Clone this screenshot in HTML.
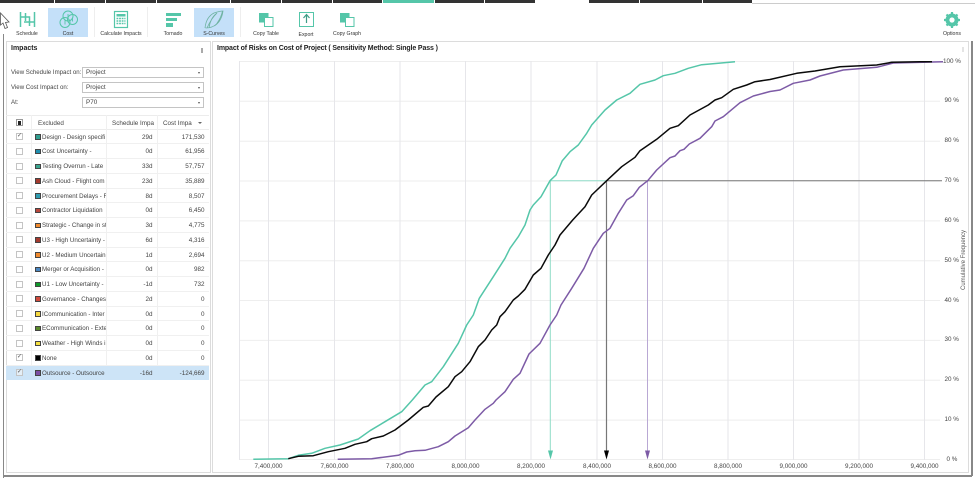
<!DOCTYPE html>
<html><head><meta charset="utf-8"><style>
html,body{margin:0;padding:0;background:#fff}
#p{position:relative;width:975px;height:478px;overflow:hidden;background:#fff;font-family:"Liberation Sans",sans-serif;color:#444;filter:blur(.35px)}
#p div{position:absolute;box-sizing:border-box}
.t{white-space:nowrap;font-size:6.6px;line-height:10px;height:10px}
.c{text-align:center}.r{text-align:right}
.lb{font-size:5.2px;color:#333;text-align:center;line-height:8px;height:8px;white-space:nowrap}
.dd{left:82px;width:122px;height:11px;border:1px solid #c4c4c4;font-size:6.3px;line-height:9.5px;padding-left:3px;background:#fff}
.dd i{position:absolute;right:3px;top:4px;width:0;height:0;border:1.5px solid transparent;border-top:2px solid #555}
.rw{left:6px;width:203px;height:14.75px;border-bottom:1px solid #f0f0f0}
.cb{left:10px;top:3.5px;width:7px;height:7px;border:1px solid #c4c4c4;background:#fff;font-size:6px;line-height:5px;text-align:center;color:#555}
.sw{left:29px;top:4.5px;width:5.5px;height:5.5px;border:1px solid #444}
.n{left:36px;width:64px;top:3px;overflow:hidden;font-size:6.2px;line-height:10px;height:10px;white-space:nowrap;color:#444}
.s{left:101px;width:45.5px;top:3px;text-align:right;font-size:6.3px;line-height:10px}
.k{left:152px;width:46.5px;top:3px;text-align:right;font-size:6.3px;line-height:10px}
.bar{top:0;height:3px;background:#333}
</style></head><body><div id="p">

<div class="bar" style="left:0;width:54px"></div>
<div class="bar" style="left:55px;width:49.5px"></div>
<div class="bar" style="left:105.5px;width:50px"></div>
<div class="bar" style="left:156.5px;width:73px"></div>
<div class="bar" style="left:230.5px;width:50px"></div>
<div class="bar" style="left:281.5px;width:50px"></div>
<div class="bar" style="left:332.5px;width:49.5px"></div>
<div class="bar" style="left:383px;width:51px;background:#55c6a9"></div>
<div class="bar" style="left:435px;width:49px"></div>
<div class="bar" style="left:485px;width:50px"></div>
<div class="bar" style="left:589px;width:50px"></div>
<div class="bar" style="left:640px;width:62px"></div>
<div class="bar" style="left:703px;width:49px"></div>
<div style="left:752px;top:3px;width:223px;height:1px;background:#ccc"></div>

<div style="left:48px;top:8px;width:40px;height:29px;background:#c4e0f9"></div>
<div style="left:194px;top:8px;width:40px;height:29px;background:#c4e0f9"></div>
<div style="left:94px;top:7px;width:1px;height:30px;background:#eee"></div>
<div style="left:147px;top:7px;width:1px;height:30px;background:#eee"></div>
<div style="left:240px;top:7px;width:1px;height:30px;background:#eee"></div>

<svg style="position:absolute;left:0;top:0" width="975" height="40" fill="none" stroke="#55c6a9">
<path d="M20.5 12v15M34.5 12v15M20.5 17h9v5h5M25.5 13v8M29.5 17v9M24 22h6" stroke-width="1.5"/>
<circle cx="68" cy="16" r="5"/><circle cx="72.5" cy="19.5" r="5"/><circle cx="65" cy="22.5" r="5"/>
<path d="M65 20.5v4M68 14v4M72.5 17.5v4" stroke-width=".9"/>
<rect x="114.5" y="11.5" width="13" height="16" stroke-width="1.2"/>
<path d="M116.5 14h9v2.5h-9z" fill="#55c6a9" stroke="none"/>
<path d="M116.5 18.5h9M116.5 21h9M116.5 23.5h9" stroke-dasharray="1.8 .8" stroke-width="1.4"/>
<path d="M166 13h15v3h-15zM166 18h11v3h-11zM166 23h7v4h-7z" fill="#55c6a9" stroke="none"/>
<path d="M205 28c1-9 5-13 9-15 3-1 6-2 9-2-1 8-5 13-9 15M209 28c1-8 4-12 8-15M205.500 28c4 0 8-1 11-4 3-4 5-8 6-13M207 28c3-7 6-11 10-15" stroke="#6fb3a2" stroke-width=".8"/>
<rect x="259" y="13" width="9.500" height="9.500" fill="#55c6a9" stroke="none"/>
<rect x="264.500" y="17.500" width="8.500" height="9" fill="#fff" stroke-width="1"/>
<rect x="299.500" y="12.500" width="14" height="14" stroke-width="1"/>
<path d="M306.500 23v-8M303.500 18l3-3.500 3 3.500" stroke="#3d9c86" stroke-width="1.200"/>
<rect x="340" y="13" width="9.500" height="9.500" fill="#55c6a9" stroke="none"/>
<rect x="345.500" y="17.500" width="8.500" height="9" fill="#fff" stroke-width="1"/>
<circle cx="952" cy="20" r="6.500" fill="#55c6a9" stroke="none"/>
<path d="M952 12v16M944 20h16M946.500 14.500l11 11M957.500 14.500l-11 11" stroke-width="2.200"/>
<circle cx="952" cy="20" r="3.200" fill="#fff" stroke-width="1.200"/>
</svg>

<div class="lb" style="left:7px;width:40px;top:29.500px">Schedule</div>
<div class="lb" style="left:48px;width:40px;top:29.500px">Cost</div>
<div class="lb" style="left:95px;width:52px;top:29.500px">Calculate Impacts</div>
<div class="lb" style="left:153px;width:40px;top:29.500px">Tornado</div>
<div class="lb" style="left:194px;width:40px;top:29.500px">S-Curves</div>
<div class="lb" style="left:246px;width:40px;top:29.500px">Copy Table</div>
<div class="lb" style="left:286px;width:40px;top:30.500px">Export</div>
<div class="lb" style="left:327px;width:40px;top:29.500px">Copy Graph</div>
<div class="lb" style="left:932px;width:40px;top:29.500px">Options</div>

<div style="left:2.500px;top:34px;width:1.500px;height:444px;background:#888"></div>
<div style="left:3px;top:474.500px;width:969px;height:2px;background:#888"></div>
<div style="left:970.500px;top:41px;width:2px;height:435px;background:#888"></div>

<div style="left:5.500px;top:41px;width:205px;height:432px;border:1px solid #dcdcdc;background:#fff"></div>
<div style="left:212px;top:41px;width:757px;height:432px;border:1px solid #dcdcdc;background:#fff"></div>

<div class="t" style="left:11px;top:44px;font-weight:bold;font-size:7px;color:#222">Impacts</div>
<div style="left:201px;top:48px;width:2px;height:5px;background:#aaa"></div>
<div class="t" style="left:11px;top:67.500px;font-size:6.100px">View Schedule Impact on:</div>
<div class="t" style="left:11px;top:82.500px;font-size:6.100px">View Cost Impact on:</div>
<div class="t" style="left:11px;top:97.500px;font-size:6.100px">At:</div>
<div class="dd" style="top:66.500px">Project<i></i></div>
<div class="dd" style="top:81.500px">Project<i></i></div>
<div class="dd" style="top:96.500px">P70<i></i></div>

<div style="left:6px;top:115px;width:203px;height:14.500px;border-top:1px solid #ececec;border-bottom:1px solid #ececec"></div>
<div style="left:16px;top:119px;width:6.500px;height:7px;border:1px solid #999;background:#fff"></div>
<div style="left:17.500px;top:120.500px;width:3.500px;height:4px;background:#222"></div>
<div class="t" style="left:38px;top:118.500px;font-size:6.300px">Excluded</div>
<div class="t" style="left:112px;top:118.500px;font-size:6.300px">Schedule Impa</div>
<div class="t" style="left:163px;top:118.500px;font-size:6.300px">Cost Impa</div>
<div style="left:198px;top:122px;width:0;height:0;border:2px solid transparent;border-top:2.500px solid #666"></div>

<div style="left:31px;top:115px;width:1px;height:265px;background:#f0f0f0"></div>
<div style="left:106px;top:115px;width:1px;height:265px;background:#f0f0f0"></div>
<div style="left:157px;top:115px;width:1px;height:265px;background:#f0f0f0"></div>

<div class="rw" style="top:129.500px"><div class="cb">✓</div><div class="sw" style="background:#2f9e8f"></div><div class="n">Design - Design specifi</div><div class="s">29d</div><div class="k">171,530</div></div>
<div class="rw" style="top:144.250px"><div class="cb"></div><div class="sw" style="background:#1f8fb0"></div><div class="n">Cost Uncertainty -</div><div class="s">0d</div><div class="k">61,956</div></div>
<div class="rw" style="top:159px"><div class="cb"></div><div class="sw" style="background:#3aa58f"></div><div class="n">Testing Overrun - Late</div><div class="s">33d</div><div class="k">57,757</div></div>
<div class="rw" style="top:173.750px"><div class="cb"></div><div class="sw" style="background:#a33a2e"></div><div class="n">Ash Cloud - Flight com</div><div class="s">23d</div><div class="k">35,889</div></div>
<div class="rw" style="top:188.500px"><div class="cb"></div><div class="sw" style="background:#2f9cb0"></div><div class="n">Procurement Delays - F</div><div class="s">8d</div><div class="k">8,507</div></div>
<div class="rw" style="top:203.250px"><div class="cb"></div><div class="sw" style="background:#b8473c"></div><div class="n">Contractor Liquidation</div><div class="s">0d</div><div class="k">6,450</div></div>
<div class="rw" style="top:218px"><div class="cb"></div><div class="sw" style="background:#f08a2e"></div><div class="n">Strategic - Change in st</div><div class="s">3d</div><div class="k">4,775</div></div>
<div class="rw" style="top:232.750px"><div class="cb"></div><div class="sw" style="background:#a33a2e"></div><div class="n">U3 - High Uncertainty -</div><div class="s">6d</div><div class="k">4,316</div></div>
<div class="rw" style="top:247.500px"><div class="cb"></div><div class="sw" style="background:#f08a2e"></div><div class="n">U2 - Medium Uncertain</div><div class="s">1d</div><div class="k">2,694</div></div>
<div class="rw" style="top:262.250px"><div class="cb"></div><div class="sw" style="background:#4a86c0"></div><div class="n">Merger or Acquisition -</div><div class="s">0d</div><div class="k">982</div></div>
<div class="rw" style="top:277px"><div class="cb"></div><div class="sw" style="background:#0f9a2a"></div><div class="n">U1 - Low Uncertainty -</div><div class="s">-1d</div><div class="k">732</div></div>
<div class="rw" style="top:291.750px"><div class="cb"></div><div class="sw" style="background:#d04a3c"></div><div class="n">Governance - Changes</div><div class="s">2d</div><div class="k">0</div></div>
<div class="rw" style="top:306.500px"><div class="cb"></div><div class="sw" style="background:#f5d840"></div><div class="n">ICommunication - Inter</div><div class="s">0d</div><div class="k">0</div></div>
<div class="rw" style="top:321.250px"><div class="cb"></div><div class="sw" style="background:#5a8a2a"></div><div class="n">ECommunication - Exte</div><div class="s">0d</div><div class="k">0</div></div>
<div class="rw" style="top:336px"><div class="cb"></div><div class="sw" style="background:#f5e040"></div><div class="n">Weather - High Winds i</div><div class="s">0d</div><div class="k">0</div></div>
<div class="rw" style="top:350.750px"><div class="cb">✓</div><div class="sw" style="background:#000"></div><div class="n">None</div><div class="s">0d</div><div class="k">0</div></div>
<div class="rw" style="top:365.500px;background:#cde4f7;border-bottom:0"><div class="cb" style="background:#e4eef6">✓</div><div class="sw" style="background:#7b4fa5"></div><div class="n">Outsource - Outsource</div><div class="s">-16d</div><div class="k">-124,669</div></div>

<div class="t" style="left:217px;top:43.500px;font-weight:bold;font-size:7px;color:#222;letter-spacing:-.13px">Impact of Risks on Cost of Project ( Sensitivity Method: Single Pass )</div>
<div style="left:962px;top:47px;width:2px;height:5px;background:#e4e4e4"></div>

<svg style="position:absolute;left:0;top:0" width="975" height="478" fill="none">
<g stroke="#eeeeee" stroke-width="1">
<path d="M240 61.500H940M240 101.300H940M240 141.200H940M240 181H940M240 220.900H940M240 260.700H940M240 300.500H940M240 340.400H940M240 380.200H940M240 420.100H940M240 459.500H940"/>
</g>
<g stroke="#e6e6ea" stroke-width="1">
<path d="M239.500 61V460M268.500 61V460M334.500 61V460M400 61V460M465.500 61V460M531 61V460M597 61V460M662.500 61V460M728 61V460M793.500 61V460M859 61V460M924.500 61V460"/>
</g>
<path d="M550.300 180.700H606.500" stroke="#8fdcc7" stroke-width="1"/>
<path d="M606.500 180.700H942" stroke="#777" stroke-width="1"/>
<path d="M550.300 180.700V452" stroke="#8fdcc7" stroke-width="1"/>
<path d="M606.500 180.700V452" stroke="#777" stroke-width="1.200"/>
<path d="M647.500 180.700V452" stroke="#b9a8d4" stroke-width="1"/>
<path d="M548 450.500h5l-2.500 9z" fill="#55c6a9"/>
<path d="M604 450.500h5l-2.500 9z" fill="#000"/>
<path d="M645 450.500h5l-2.500 9z" fill="#7d5ba6"/>

<polyline stroke="#55c6a9" stroke-width="1.500" stroke-linejoin="round" points="253.300,459.300 288.300,458.700 298.300,455.300 311.700,453.300 325,448.300 340,445 358.300,439 370,430.700 385,421.700 401.700,411.700 412.300,400 425,385 431.700,381.700 443.300,366.700 458.300,343.300 466.700,325 473.300,315 479.300,298.300 493.300,276.700 505,258.300 510,248.300 518.300,236.700 525,225 530,210 533.300,205 541,196.700 550,180.700 556,175 562.300,160.700 570,151.700 578.300,145 586.700,133.300 591.700,125 605,110 616.700,100 630,93.300 640,84.300 655,80 663.300,75.700 675,73.300 688.300,68.300 701.700,64.700 735,61.700"/>
<polyline stroke="#7d5ba6" stroke-width="1.500" stroke-linejoin="round" points="337.700,459.300 371.700,458.700 398.300,455.300 406.700,452 415,450.700 425,450.300 438.300,446.700 448.300,441.700 455,436 468.300,427.700 475,420 485,409.300 493.300,403.300 496,400 505,391.700 513.300,379.300 520,373.300 529,354 540,343.300 550,325 556.700,315 561,305 571.700,288.300 584,268.300 593.300,248.300 603.300,233.300 610,228.300 618.300,213.300 626.700,200 633.300,195.700 639.300,187.300 647.700,180.700 656.700,170 670,157.700 675,156 680,150.700 684,149.300 689.300,144 700,138.300 711.700,126.700 715,121 723.300,116.700 740,102.700 753.300,96 770,91.500 780,90 793.300,83.300 810,80 820,76 843.300,70 876.700,67.300 893.300,63 943,61.700"/>
<polyline stroke="#0a0a0a" stroke-width="1.500" stroke-linejoin="round" points="288.300,458.700 298.300,456.300 313.300,455.700 328.300,451.700 345,448.300 355,444.300 366.700,441.700 371.700,438.700 383.300,436 395,430 408.300,420 423.300,407.300 428.300,406 436,397 448.300,386.700 455,376.700 461.700,371.700 470,361.700 478.300,346.700 485,340 491.700,330 496.700,325 500,316.700 505,311.700 513.300,300 518.300,296 525,289.300 533.300,275 541,268.300 548.300,255 555,245 560,235 572.700,220 585,206.700 591.700,195 606.700,180.700 621.700,166.700 635,157.300 640,150.700 656.700,139.300 670,128.300 678.300,125.700 690,115 708.300,105 715,100 721.700,97.700 733.300,89.300 746.700,85 755,81.700 770,79.500 796.700,73.300 815,71 840,66.700 876.700,65 891.700,62.300 920,61.700 932,61.700"/>
</svg>

<div class="t c" style="left:248.500px;width:40px;top:462px;font-size:6.300px">7,400,000</div>
<div class="t c" style="left:314.500px;width:40px;top:462px;font-size:6.300px">7,600,000</div>
<div class="t c" style="left:380px;width:40px;top:462px;font-size:6.300px">7,800,000</div>
<div class="t c" style="left:445.500px;width:40px;top:462px;font-size:6.300px">8,000,000</div>
<div class="t c" style="left:511px;width:40px;top:462px;font-size:6.300px">8,200,000</div>
<div class="t c" style="left:577px;width:40px;top:462px;font-size:6.300px">8,400,000</div>
<div class="t c" style="left:642.500px;width:40px;top:462px;font-size:6.300px">8,600,000</div>
<div class="t c" style="left:708px;width:40px;top:462px;font-size:6.300px">8,800,000</div>
<div class="t c" style="left:773.500px;width:40px;top:462px;font-size:6.300px">9,000,000</div>
<div class="t c" style="left:839px;width:40px;top:462px;font-size:6.300px">9,200,000</div>
<div class="t c" style="left:904.500px;width:40px;top:462px;font-size:6.300px">9,400,000</div>

<div class="t" style="left:943px;top:56.500px;font-size:6.300px">100 %</div>
<div class="t" style="left:944.500px;top:96.300px;font-size:6.300px">90 %</div>
<div class="t" style="left:944.500px;top:136.200px;font-size:6.300px">80 %</div>
<div class="t" style="left:944.500px;top:176px;font-size:6.300px">70 %</div>
<div class="t" style="left:944.500px;top:215.900px;font-size:6.300px">60 %</div>
<div class="t" style="left:944.500px;top:255.700px;font-size:6.300px">50 %</div>
<div class="t" style="left:944.500px;top:295.500px;font-size:6.300px">40 %</div>
<div class="t" style="left:944.500px;top:335.400px;font-size:6.300px">30 %</div>
<div class="t" style="left:944.500px;top:375.200px;font-size:6.300px">20 %</div>
<div class="t" style="left:944.500px;top:415.100px;font-size:6.300px">10 %</div>
<div class="t" style="left:946.500px;top:455px;font-size:6.300px">0 %</div>
<div class="t c" style="left:924px;width:80px;top:255px;font-size:6px;transform:rotate(-90deg);color:#555">Cumulative Frequency</div>

<svg style="position:absolute;left:0;top:0" width="14" height="34"><path d="M.5 13L.5 25 3 23 5 28.500 7.500 27.500 5.500 22.500 9 22z" fill="#fff" stroke="#555" stroke-width=".8"/></svg>
</div></body></html>
